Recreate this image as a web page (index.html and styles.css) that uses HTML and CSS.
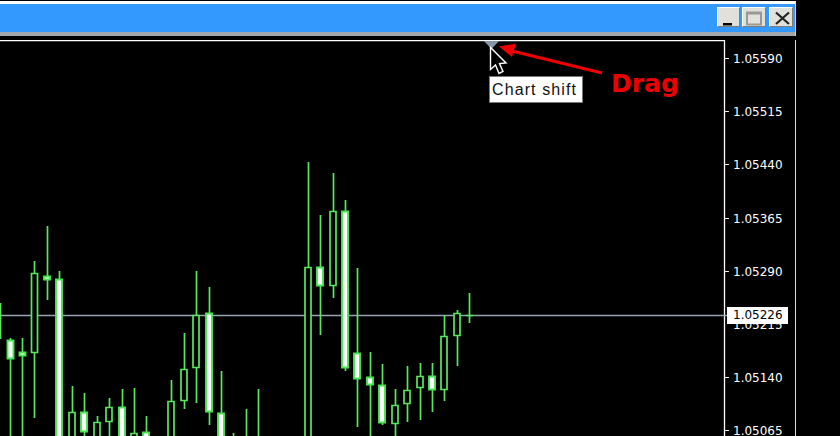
FILE: index.html
```html
<!DOCTYPE html>
<html lang="en">
<head>
<meta charset="utf-8">
<title>Chart shift</title>
<link rel="stylesheet" href="styles.css">
</head>
<body>
<div class="window">
  <div class="titlebar">
    <button class="winbtn winbtn-min"><svg class="glyph" viewBox="0 0 21 18"><path class="min" d="M5 15h9v2.500H5z"/></svg></button>
    <button class="winbtn"><svg class="glyph" viewBox="0 0 22 18"><path class="max" d="M4 4.500h14v12H4zM4 5.500h14"/></svg></button>
    <button class="winbtn"><svg class="glyph" viewBox="0 0 22 18"><path class="close" d="M6 4.500l13 11.500M19 4.500l-13 11.500"/></svg></button>
  </div>
  <div class="divider"></div>
  <div class="chart">
    <svg class="plot" viewBox="0 40 796 396" width="796" height="396">
      <path class="frame" d="M0 40.500H724.500V436"/>
      <path class="ticks" d="M725 58.500h4M725 111.500h4M725 164.500h4M725 218.500h4M725 271.500h4M725 377.500h4M725 430.500h4"/>
      <text class="price" x="733" y="63">1.05590</text>
      <text class="price" x="733" y="116">1.05515</text>
      <text class="price" x="733" y="169">1.05440</text>
      <text class="price" x="733" y="223">1.05365</text>
      <text class="price" x="733" y="276">1.05290</text>
      <text class="price" x="733" y="329">1.05215</text>
      <text class="price" x="733" y="382">1.05140</text>
      <text class="price" x="733" y="435">1.05065</text>

      <path class="level" d="M0 315.500H729"/>

      <path class="wick" d="M0.500 303V339M10.500 338V436M22.500 338V436M34.500 261V418M47.500 226V300M59.500 271V279M72.500 386V412M84.500 393V436M97.500 416V422M109.500 398V436M122.500 389V407M134.500 388V433M146.500 416V432M171.500 380V401M184.500 333V409M196.500 271V403M209.500 287V425M221.500 371V413M233.500 433V436M246.500 409V436M258.500 389V436M308.500 162V267M320.500 215V335M333.500 173V298M345.500 200V211M345.500 368V371M357.500 268V427M370.500 352V436M382.500 364V425M395.500 389V436M407.500 366V422M420.500 363V420M432.500 363V412M444.500 315V401M457.500 310V366M469.500 293V323M466 315.500H473"/>

      <path class="hollow" d="M31.500 273.500h6v79h-6zM69 412.500h6v30h-6zM94 422.500h6v20h-6zM106 407.500h6v14h-6zM168 401.500h6v40h-6zM181 369.500h6v31h-6zM193 315.500h6v52h-6zM131 433.500h6v10h-6zM305 267.500h6v175h-6zM330 211.500h6v74h-6zM392 405.500h6v18h-6zM404 390.500h6v13h-6zM417 376.500h6v11h-6zM441 336.500h6v53h-6zM454 313.500h6v22h-6z"/>
      <path class="solid" d="M7.500 340.500h6v18h-6zM19.500 352.500h6v3h-6zM44 276.500h6v3h-6zM56 279.500h6v170h-6zM81 412.500h6v19h-6zM119 407.500h6v40h-6zM143 432.500h6v10h-6zM206 313.500h6v98h-6zM218 413.500h6v30h-6zM317 267.500h6v18h-6zM342 211.500h6v156h-6zM354 353.500h6v25h-6zM367 377.500h6v7h-6zM379 385.500h6v37h-6zM429 376.500h6v13h-6z"/>

      <polygon class="handle" points="484,41 499,41 491.500,49"/>
      <path class="pointer" d="M490.500 47.500V69.500L495.500 65L499 73.500L503 71.500L499.500 63.500L506 63z"/>
      <path class="callout" d="M602 73L510 50.500"/>
      <polygon class="callout-head" points="499,46.500 516,43.500 512,57"/>
    </svg>
    <div class="marker">1.05226</div>
    <div class="tooltip">Chart shift</div>
    <div class="drag">Drag</div>
  </div>
</div>
</body>
</html>
```

FILE: styles.css
```css
* { box-sizing: border-box; }
html, body { margin: 0; padding: 0; background: #000; overflow: hidden; }
body { width: 840px; height: 436px; }

.window {
  width: 796px;
  height: 436px;
  padding-top: 1px;
  background: #000;
  display: flex;
  flex-direction: column;
}
.titlebar {
  height: 31px;
  flex: none;
  display: flex;
  justify-content: flex-end;
  align-items: flex-start;
  gap: 3px;
  padding: 3px 2px 0 0;
  background: #3399ff;
  border-top: 3px solid #fff;
  border-right: 1px solid #cfd6de;
}
.winbtn {
  width: 24px;
  height: 20px;
  padding: 0;
  display: block;
  background: #e2e0da;
  border: 1px solid;
  border-color: #fff #7c7c78 #7c7c78 #fff;
}
.winbtn-min { width: 23px; margin-right: -1px; }
.glyph { display: block; width: 100%; height: 18px; }
.min { fill: #000; }
.max { fill: none; stroke: #9a9a94; stroke-width: 2; }
.close { fill: none; stroke: #222; stroke-width: 2.200; }
.divider {
  height: 4px;
  flex: none;
  background: #a2a7ad;
  border-right: 1px solid #cfd6de;
}
.chart {
  position: relative;
  flex: 1;
  margin-top: 4px;
  border-right: 1px solid #d8dce0;
}
.plot { display: block; }
.frame { fill: none; stroke: #fff; stroke-width: 1.300; }
.ticks { fill: none; stroke: #f0f0f0; stroke-width: 1; }
.price { font: 12px "DejaVu Sans", sans-serif; fill: #fff; }
.level { fill: none; stroke: #98a2b2; stroke-width: 1.300; }
.wick { fill: none; stroke: #58e85c; stroke-width: 1.700; }
.hollow { fill: #000; stroke: #58e85c; stroke-width: 1.700; }
.solid { fill: #fff; stroke: #48e650; stroke-width: 1.900; }
.handle { fill: #8496a8; }
.pointer { fill: #000; stroke: #fff; stroke-width: 1.400; }
.callout { fill: none; stroke: #ee0000; stroke-width: 3; }
.callout-head { fill: #ee0000; }

.marker {
  position: absolute;
  left: 727px;
  top: 267px;
  width: 61px;
  height: 17px;
  padding-left: 6px;
  background: #fff;
  color: #000;
  font: 12px/16px "DejaVu Sans", sans-serif;
}
.tooltip {
  position: absolute;
  left: 489px;
  top: 36px;
  width: 94px;
  height: 27px;
  padding-left: 2px;
  background: #fff;
  border: 1px solid #777;
  color: #111;
  font: 16px/25px "Liberation Sans", sans-serif;
  letter-spacing: 1.100px;
  white-space: nowrap;
}
.drag {
  position: absolute;
  left: 611px;
  top: 29px;
  color: #ee0000;
  font: bold 25px/30px "DejaVu Sans", sans-serif;
}
```
